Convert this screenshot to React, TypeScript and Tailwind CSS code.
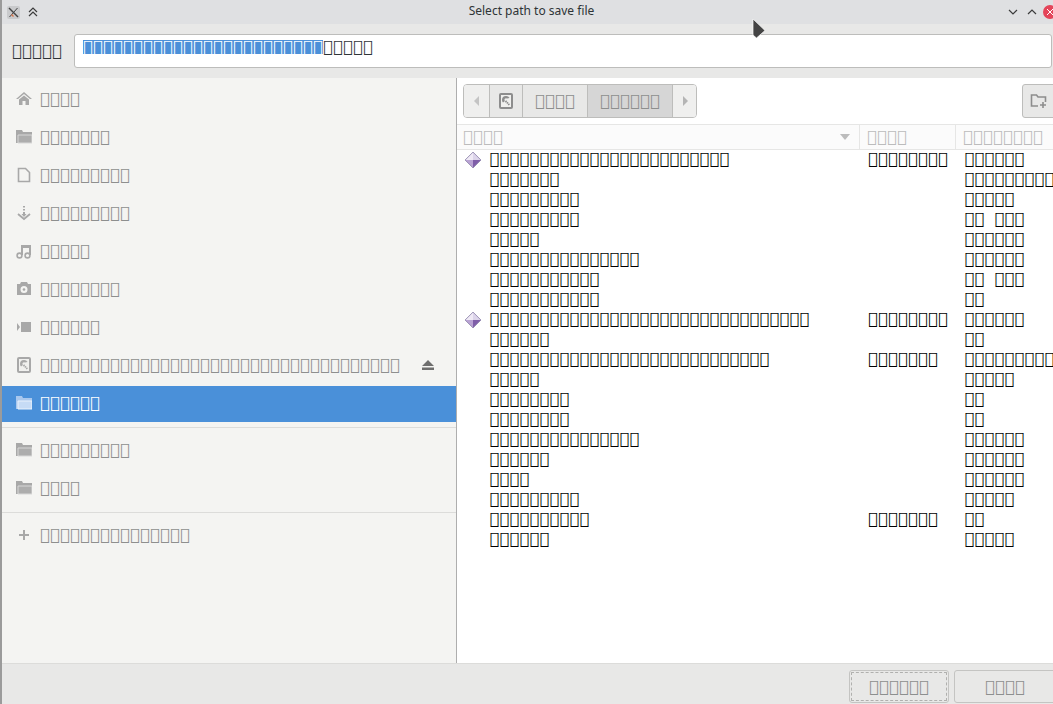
const box = (n: number) => '\uE000'.repeat(n);

const tofu = "font-['DejaVu_Sans',sans-serif] text-[16px] tracking-[0.4px] leading-5 [word-spacing:4.5px]";

function FolderIcon({ light }: { light?: boolean }) {
  return (
    <svg width="16" height="16" viewBox="0 0 16 16" className="shrink-0">
      <path d="M0 1h6l1 2h9v11H0z" fill={light ? '#a9c8ee' : '#a8a8a8'} />
      <path d="M2 6h14v8H2z" fill={light ? '#c6dbf5' : '#adadad'} stroke={light ? '#eaf2fc' : '#d8d8d8'} strokeWidth="1" />
    </svg>
  );
}

function HomeIcon() {
  return (
    <svg width="16" height="16" viewBox="0 0 16 16" className="shrink-0">
      <path d="M0 8l8-7 8 7h-2L8 3 2 8z" fill="#a8a8a8" />
      <path d="M3 8.5L8 4.5l5 4V14H9.5v-4h-3v4H3z" fill="#a8a8a8" />
    </svg>
  );
}

function DocIcon() {
  return (
    <svg width="16" height="16" viewBox="0 0 16 16" className="shrink-0">
      <path d="M2.5 1.5h7l4 4v9h-11z" fill="#f4f4f2" stroke="#a8a8a8" strokeWidth="1.6" />
    </svg>
  );
}

function DownloadIcon() {
  return (
    <svg width="16" height="16" viewBox="0 0 16 16" className="shrink-0">
      <path d="M7 1h2v1.5H7zM7 4h2v1.5H7zM7 7h2v2H7z" fill="#a8a8a8" />
      <path d="M2 9l6 5 6-5" fill="none" stroke="#a8a8a8" strokeWidth="1.8" />
      <path d="M5.5 9h5L8 12z" fill="#a8a8a8" />
    </svg>
  );
}

function MusicIcon() {
  return (
    <svg width="16" height="16" viewBox="0 0 16 16" className="shrink-0">
      <path d="M5 2h10v3H7v7H5zM13 5h2v7h-2z" fill="#a8a8a8" />
      <circle cx="3.5" cy="12.5" r="2.4" fill="none" stroke="#a8a8a8" strokeWidth="1.6" />
      <circle cx="11.5" cy="12.5" r="2.4" fill="none" stroke="#a8a8a8" strokeWidth="1.6" />
    </svg>
  );
}

function CameraIcon() {
  return (
    <svg width="16" height="16" viewBox="0 0 16 16" className="shrink-0">
      <path fillRule="evenodd" d="M1 3h3l1-2h6l1 2h3v11H1zM8 5a3.5 3.5 0 100 7 3.5 3.5 0 000-7z" fill="#a8a8a8" />
      <circle cx="8" cy="8.5" r="1.3" fill="#a8a8a8" />
    </svg>
  );
}

function VideoIcon() {
  return (
    <svg width="16" height="16" viewBox="0 0 16 16" className="shrink-0">
      <path d="M5 3h10v10H5zM1 4l3 4-3 4z" fill="#a8a8a8" />
    </svg>
  );
}

function DriveIcon({ color = '#a8a8a8' }: { color?: string }) {
  return (
    <svg width="16" height="16" viewBox="0 0 16 16" className="shrink-0">
      <rect x="1" y="0" width="14" height="16" rx="2" fill={color} />
      <rect x="3" y="2" width="10" height="12" fill="#f0f0ee" />
      <path d="M8 3a4 4 0 00-4 4c0 1 .4 2 1 2.6L7 8a1.5 1.5 0 112-2.4L11.6 5A4 4 0 008 3z" fill={color} />
      <path d="M7.5 8l4 4" stroke={color} strokeWidth="1.8" strokeDasharray="1.4 .6" />
    </svg>
  );
}

function PlusIcon() {
  return (
    <svg width="16" height="16" viewBox="0 0 16 16" className="shrink-0">
      <path d="M7 3h2v4h4v2H9v4H7V9H3V7h4z" fill="#a8a8a8" />
    </svg>
  );
}

function DiamondIcon() {
  return (
    <svg width="18" height="18" viewBox="0 0 18 18" className="mt-[2px]">
      <path d="M9 1l8 8-8 8-8-8z" fill="#a58cc4" stroke="#8d86a8" strokeWidth="0.8" />
      <path d="M9 1.5L16.5 9H9z" fill="#dcd4ea" />
      <path d="M1.5 9L9 1.5V9z" fill="#efeaf5" />
      <path d="M1.5 9H9v7.5z" fill="#b9a3d3" />
      <path d="M9 9h7.5L9 16.5z" fill="#7f5ea8" />
    </svg>
  );
}

function Place({ icon, n, active }: { icon: React.ReactNode; n: number; active?: boolean }) {
  return (
    <div className={`flex h-9 mb-0.5 items-center gap-2 pl-[14px] ${active ? 'bg-[#4a90d9] pb-[2px] text-white' : 'text-[#8d8f8e]'}`}>
      {icon}
      <span className={tofu}>{box(n)}</span>
    </div>
  );
}

const rows: [number, number, string, boolean?][] = [
  [24, 8, box(6), true],
  [7, 0, box(9)],
  [9, 0, box(5)],
  [9, 0, `${box(2)} ${box(3)}`],
  [5, 0, box(6)],
  [15, 0, box(6)],
  [11, 0, `${box(2)} ${box(3)}`],
  [11, 0, box(2)],
  [32, 8, box(6), true],
  [6, 0, box(2)],
  [28, 7, box(9)],
  [5, 0, box(5)],
  [8, 0, box(2)],
  [8, 0, box(2)],
  [15, 0, box(6)],
  [6, 0, box(6)],
  [4, 0, box(6)],
  [9, 0, box(5)],
  [10, 7, box(2)],
  [6, 0, box(5)],
];

export default function App() {
  return (
    <div className="relative flex h-[704px] w-[1053px] flex-col overflow-hidden border-l-2 border-[#9b9b9b] bg-white font-['DejaVu_Sans',sans-serif]">
      {/* titlebar */}
      <div className="flex h-6 shrink-0 items-center justify-between bg-[#dfe0e2] pl-[5px] pr-0">
        <div className="flex items-center gap-[7px]">
          <div className="flex h-[13px] w-[13px] items-center justify-center rounded-[2px] bg-[#c9cacc]">
            <svg width="11" height="11" viewBox="0 0 11 11">
              <path d="M1 1l9 9" stroke="#444" strokeWidth="1.4" />
              <path d="M9.5 1L1.5 10" stroke="#444" strokeWidth="1" />
              <path d="M3.5 7.5l2 2" stroke="#d9764a" strokeWidth="1.4" />
            </svg>
          </div>
          <svg width="12" height="12" viewBox="0 0 12 12" fill="none" stroke="#3c3c3c" strokeWidth="1.2">
            <path d="M2 6l4-4 4 4M2 10l4-4 4 4" />
          </svg>
        </div>
        <span className="ml-[16px] -mt-[2px] font-['Noto_Sans',sans-serif] text-[12px] text-[#2e3436]">Select path to save file</span>
        <div className="flex items-center gap-[9px]">
          <svg width="10" height="10" viewBox="0 0 10 10" fill="none" stroke="#3c3c3c" strokeWidth="1.2">
            <path d="M1 3l4 4 4-4" />
          </svg>
          <svg width="10" height="10" viewBox="0 0 10 10" fill="none" stroke="#3c3c3c" strokeWidth="1.2">
            <path d="M1 7l4-4 4 4" />
          </svg>
          <svg width="14" height="14" viewBox="0 0 14 14" className="-ml-[3px] -mr-[4px]">
            <circle cx="7" cy="7" r="7" fill="#e4455a" />
            <path d="M4 4l6 6M10 4l-6 6" stroke="#fff" strokeWidth="1" />
          </svg>
        </div>
      </div>

      {/* name row */}
      <div className="flex h-[54px] shrink-0 items-center gap-3 bg-[#e8e8e7] pl-[10px] pr-px">
        <span className={`${tofu} -mt-px text-[#2e3436]`}>{box(5)}</span>
        <div className={`h-[34px] flex-1 rounded-[3px] border border-[#bdbdbb] bg-white pl-2 pt-[2px] text-[#2e3436] ${tofu}`}>
          <span className="inline-block h-[14px] bg-[#4a90d9] leading-[14px] text-white">{box(24)}</span>
          <span className="inline-block h-[14px] leading-[14px]">{box(5)}</span>
        </div>
      </div>

      <div className="flex min-h-0 flex-1">
        {/* sidebar */}
        <div className="w-[455px] shrink-0 border-r border-[#aeaeae] bg-[#f4f4f2] pt-[3px]">
          <Place icon={<HomeIcon />} n={4} />
          <Place icon={<FolderIcon />} n={7} />
          <Place icon={<DocIcon />} n={9} />
          <Place icon={<DownloadIcon />} n={9} />
          <Place icon={<MusicIcon />} n={5} />
          <Place icon={<CameraIcon />} n={8} />
          <Place icon={<VideoIcon />} n={6} />
          <div className="mb-[3px] flex h-9 items-center gap-2 pl-[14px] text-[#8d8f8e]">
            <DriveIcon />
            <span className={tofu}>{box(36)}</span>
            <svg width="14" height="14" viewBox="0 0 14 14" className="ml-[13px]">
              <path d="M7 2l6 6H1zM1 9.5h12V12H1z" fill="#6e6e6e" />
            </svg>
          </div>
          <Place icon={<FolderIcon light />} n={6} active />
          <div className="mb-[4px] mt-[5px] h-px bg-[#dcdcda]" />
          <Place icon={<FolderIcon />} n={9} />
          <Place icon={<FolderIcon />} n={4} />
          <div className="mb-[4px] mt-[6px] h-px bg-[#dcdcda]" />
          <Place icon={<PlusIcon />} n={15} />
        </div>

        {/* files */}
        <div className="flex min-w-0 flex-1 flex-col">
          <div className="flex h-[46px] shrink-0 items-start justify-between pl-[6px] pt-[6px]">
            <div className="flex h-[34px] overflow-hidden rounded-[4px] border border-[#bdbdbb] text-[#8d8f8e]">
              <div className="flex w-[26px] items-center justify-center border-r border-[#bdbdbb] bg-[#efefee]">
                <svg width="8" height="10" viewBox="0 0 8 10"><path d="M6 0v10L1 5z" fill="#c4c4c4" /></svg>
              </div>
              <div className="flex w-[33px] items-center justify-center border-r border-[#bdbdbb] bg-[#e8e8e7]">
                <DriveIcon color="#8d8d8d" />
              </div>
              <div className={`flex w-[65px] items-center justify-center border-r border-[#bdbdbb] bg-[#e8e8e7] ${tofu}`}>{box(4)}</div>
              <div className={`flex w-[85px] items-center justify-center border-r border-[#bdbdbb] bg-[#d6d6d6] ${tofu}`}>{box(6)}</div>
              <div className="flex w-[23px] items-center justify-center bg-[#efefee]">
                <svg width="8" height="10" viewBox="0 0 8 10"><path d="M2 0v10l5-5z" fill="#b4b4b4" /></svg>
              </div>
            </div>
            <div className="flex h-[34px] w-[41px] -mr-[10px] items-center rounded-[3px] border border-[#bdbdbb] bg-[#e8e8e7] pl-[7px]">
              <svg width="18" height="16" viewBox="0 0 18 16" fill="none" stroke="#8d8d8d" strokeWidth="1.6">
                <path d="M8 13H1.5V2h5l1.5 2h7.5v5" />
                <path d="M13 9v6M10 12h6" />
              </svg>
            </div>
          </div>

          {/* header */}
          <div className="grid h-[26px] shrink-0 grid-cols-[403px_96px_1fr] border-y border-[#e6e6e5] bg-[#fbfbfb] text-[#bcbcbc]">
            <div className="flex items-center justify-between border-r border-[#e6e6e5] pl-[6px] pr-[9px]">
              <span className={`${tofu} -mt-px`}>{box(4)}</span>
              <svg width="10" height="6" viewBox="0 0 10 6"><path d="M0 0h10L5 6z" fill="#bcbcbc" /></svg>
            </div>
            <div className={`flex items-center border-r border-[#e6e6e5] pb-px pl-[7px] ${tofu}`}>{box(4)}</div>
            <div className={`flex items-center pb-px pl-[7px] ${tofu}`}>{box(8)}</div>
          </div>

          {/* rows */}
          <div className="-mt-px flex-1 overflow-hidden">
            {rows.map(([name, size, kind, icon], i) => (
              <div key={i} className={`grid h-5 grid-cols-[403px_96px_1fr] text-black ${tofu}`}>
                <div className="flex items-center pl-[7px]">
                  <div className="flex w-[25.5px] shrink-0 items-center">{icon && <DiamondIcon />}</div>
                  <span>{box(name)}</span>
                </div>
                <div className="pl-[8px]">{size > 0 && box(size)}</div>
                <div className="overflow-hidden whitespace-nowrap pl-[8.5px]">{kind}</div>
              </div>
            ))}
          </div>
        </div>
      </div>

      {/* footer */}
      <div className="flex h-[41px] shrink-0 items-start gap-[5px] border-t border-[#dcdcda] bg-[#e8e8e7] pl-[847px] pt-[6px] text-[#8d8f8e]">
        <div className={`flex h-[33px] w-[100px] shrink-0 items-center justify-center rounded-[3px] border border-[#c4c4c2] outline-1 -outline-offset-3 outline-dashed outline-[#b0b0ae] ${tofu}`}>{box(6)}</div>
        <div className={`flex h-[33px] w-[102px] shrink-0 items-center justify-center rounded-[3px] border border-[#c4c4c2] ${tofu}`}>{box(4)}</div>
      </div>

      {/* mouse pointer */}
      <svg width="14" height="22" viewBox="0 0 14 22" className="absolute left-[750px] top-[18px]">
        <path d="M1 1V17L4.5 20L13 12.5z" fill="#444" stroke="#fff" strokeWidth="0.7" />
      </svg>
    </div>
  );
}
